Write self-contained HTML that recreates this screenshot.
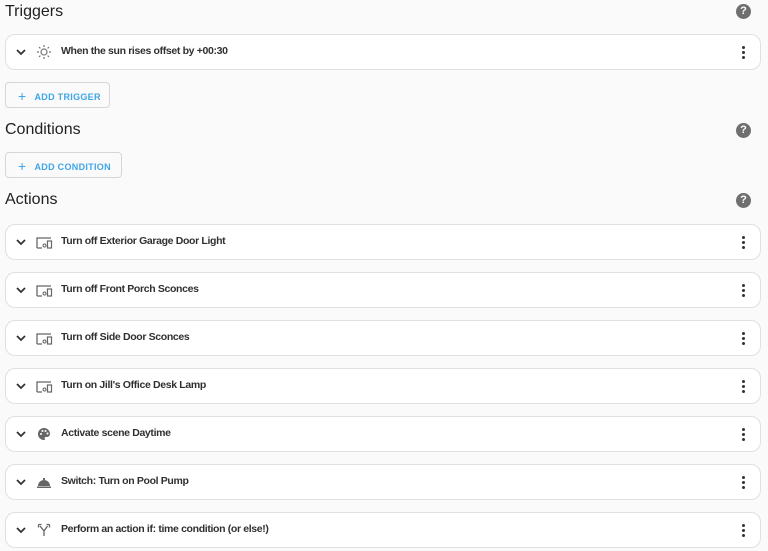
<!DOCTYPE html>
<html><head><style>
body{margin:0;width:768px;height:551px;background:#fafafa;font-family:"Liberation Sans",sans-serif;position:relative;overflow:hidden}
.h{position:absolute;left:5px;font-size:16px;color:#212121}
.q{position:absolute;left:736px;width:15px;height:15px;border-radius:50%;background:#6f6f6f;color:#fff;font-size:11px;font-weight:bold;text-align:center;line-height:15px}
.card{position:absolute;left:5px;width:756px;height:36px;background:#fff;border:1px solid #e0e0e0;border-radius:10px;box-sizing:border-box}
.card .t{position:absolute;left:55px;top:10px;font-size:10.5px;font-weight:bold;color:#303030;letter-spacing:-0.35px;white-space:nowrap}
.card .chev{position:absolute;left:10px;top:13px}
.card .ic{position:absolute;left:30px;top:9px}
.dots{position:absolute;left:736px;top:11px;width:3px}
.dots i{display:block;width:3px;height:3px;background:#333;border-radius:50%;margin-bottom:2px}
.btn{position:absolute;left:5px;height:26px;border:1px solid #d6d6d6;border-radius:4px;box-sizing:border-box;color:#3da5e8;font-size:9px;font-weight:bold;letter-spacing:0.3px;line-height:24px;padding-left:12px;background:#fafafa;white-space:nowrap}
.btn span{font-size:14px;font-weight:normal;margin-right:8px;position:relative;top:1px}
</style></head><body>
<div class="h" style="top:3px">Triggers</div><div class="q" style="top:4px">?</div>
<div class="h" style="top:121px">Conditions</div><div class="q" style="top:123px">?</div>
<div class="h" style="top:191px">Actions</div><div class="q" style="top:193px">?</div>

<div class="card" style="top:34px"><svg class="chev" width="10" height="8"><path d="M1 2l4 4 4-4" stroke="#333" stroke-width="1.8" fill="none"/></svg>
<svg class="ic" width="16" height="16" viewBox="0 0 16 16"><circle cx="8" cy="8" r="3" stroke="#777" fill="none" stroke-width="1.2"/><g stroke="#777" stroke-width="1.2"><path d="M8 1v2M8 13v2M1 8h2M13 8h2M3 3l1.4 1.4M11.6 11.6L13 13M3 13l1.4-1.4M11.6 4.4L13 3"/></g></svg>
<div class="t">When the sun rises offset by +00:30</div><div class="dots"><i></i><i></i><i></i></div></div>

<div class="btn" style="top:82px;width:105px"><span>+</span>ADD TRIGGER</div>
<div class="btn" style="top:152px;width:117px"><span>+</span>ADD CONDITION</div>

<div class="card" style="top:224px"><svg class="chev" width="10" height="8"><path d="M1 2l4 4 4-4" stroke="#333" stroke-width="1.8" fill="none"/></svg><svg class="ic" width="18" height="16" viewBox="0 0 18 16"><path d="M1 14V4h14M1 14h5" stroke="#666" stroke-width="1.3" fill="none"/><circle cx="8.5" cy="11.5" r="1.5" stroke="#666" fill="none"/><rect x="11.5" y="7" width="4" height="7" stroke="#666" fill="none" stroke-width="1.2"/></svg><div class="t">Turn off Exterior Garage Door Light</div><div class="dots"><i></i><i></i><i></i></div></div>
<div class="card" style="top:272px"><svg class="chev" width="10" height="8"><path d="M1 2l4 4 4-4" stroke="#333" stroke-width="1.8" fill="none"/></svg><svg class="ic" width="18" height="16" viewBox="0 0 18 16"><path d="M1 14V4h14M1 14h5" stroke="#666" stroke-width="1.3" fill="none"/><circle cx="8.5" cy="11.5" r="1.5" stroke="#666" fill="none"/><rect x="11.5" y="7" width="4" height="7" stroke="#666" fill="none" stroke-width="1.2"/></svg><div class="t">Turn off Front Porch Sconces</div><div class="dots"><i></i><i></i><i></i></div></div>
<div class="card" style="top:320px"><svg class="chev" width="10" height="8"><path d="M1 2l4 4 4-4" stroke="#333" stroke-width="1.8" fill="none"/></svg><svg class="ic" width="18" height="16" viewBox="0 0 18 16"><path d="M1 14V4h14M1 14h5" stroke="#666" stroke-width="1.3" fill="none"/><circle cx="8.5" cy="11.5" r="1.5" stroke="#666" fill="none"/><rect x="11.5" y="7" width="4" height="7" stroke="#666" fill="none" stroke-width="1.2"/></svg><div class="t">Turn off Side Door Sconces</div><div class="dots"><i></i><i></i><i></i></div></div>
<div class="card" style="top:368px"><svg class="chev" width="10" height="8"><path d="M1 2l4 4 4-4" stroke="#333" stroke-width="1.8" fill="none"/></svg><svg class="ic" width="18" height="16" viewBox="0 0 18 16"><path d="M1 14V4h14M1 14h5" stroke="#666" stroke-width="1.3" fill="none"/><circle cx="8.5" cy="11.5" r="1.5" stroke="#666" fill="none"/><rect x="11.5" y="7" width="4" height="7" stroke="#666" fill="none" stroke-width="1.2"/></svg><div class="t">Turn on Jill's Office Desk Lamp</div><div class="dots"><i></i><i></i><i></i></div></div>
<div class="card" style="top:416px"><svg class="chev" width="10" height="8"><path d="M1 2l4 4 4-4" stroke="#333" stroke-width="1.8" fill="none"/></svg><svg class="ic" width="16" height="16" viewBox="0 0 16 16"><path d="M8 2a6 6 0 0 0 0 12c1 0 1.3-.7.8-1.4-.5-.7 0-1.6.9-1.6H11a3 3 0 0 0 3-3c0-3.3-2.7-6-6-6z" fill="#666"/><circle cx="5" cy="8" r="1" fill="#fff"/><circle cx="6.5" cy="5" r="1" fill="#fff"/><circle cx="9.5" cy="5" r="1" fill="#fff"/><circle cx="11.5" cy="7.5" r="1" fill="#fff"/></svg><div class="t">Activate scene Daytime</div><div class="dots"><i></i><i></i><i></i></div></div>
<div class="card" style="top:464px"><svg class="chev" width="10" height="8"><path d="M1 2l4 4 4-4" stroke="#333" stroke-width="1.8" fill="none"/></svg><svg class="ic" width="16" height="16" viewBox="0 0 16 16"><path d="M2 12a6 6 0 0 1 12 0z" fill="#666"/><rect x="7" y="4" width="2" height="2" fill="#666"/><rect x="1" y="12.5" width="14" height="1.5" fill="#666"/></svg><div class="t">Switch: Turn on Pool Pump</div><div class="dots"><i></i><i></i><i></i></div></div>
<div class="card" style="top:512px"><svg class="chev" width="10" height="8"><path d="M1 2l4 4 4-4" stroke="#333" stroke-width="1.8" fill="none"/></svg><svg class="ic" width="16" height="16" viewBox="0 0 16 16"><path d="M8 14V9L4 4M8 9l3.5-5M2.5 2.5h3M2.5 2.5v3M13.5 2.5h-3M13.5 2.5v3" stroke="#666" stroke-width="1.3" fill="none"/></svg><div class="t">Perform an action if: time condition (or else!)</div><div class="dots"><i></i><i></i><i></i></div></div>
</body></html>
